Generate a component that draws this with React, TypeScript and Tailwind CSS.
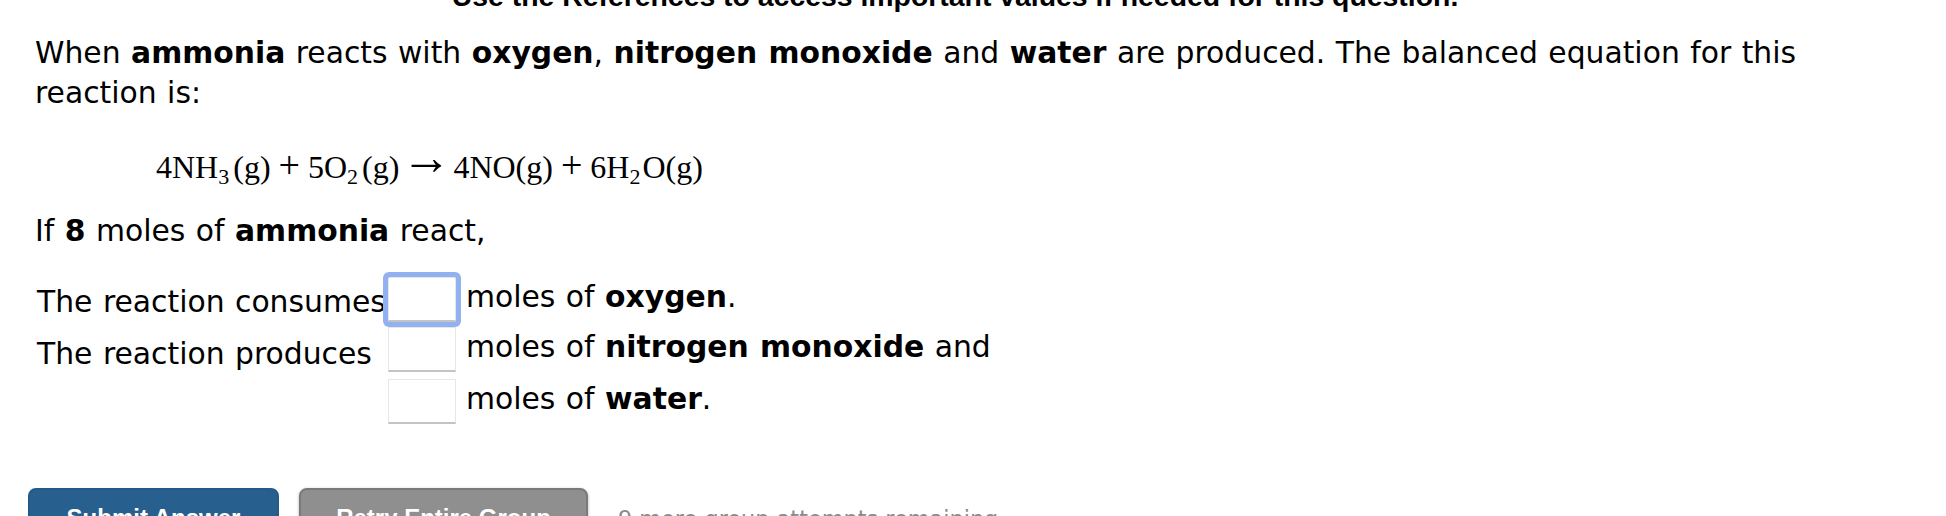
import React from "react";

const sans = { fontFamily: '"DejaVu Sans", Verdana, sans-serif' };
const arial = { fontFamily: '"Liberation Sans", Arial, sans-serif' };
const serif = { fontFamily: '"Liberation Serif", "Times New Roman", serif' };

function Sub({ children }: { children: React.ReactNode }) {
  return <span className="text-[22px] align-[-6px]">{children}</span>;
}

function Plus() {
  return <span className="mx-[8px] text-[38px]">+</span>;
}

function Box({ focused }: { focused?: boolean }) {
  return (
    <div
      className={
        "w-[68px] h-[45px] bg-white border border-[#e6e6e6] border-b-2 border-b-[#c4c4c4] shrink-0 " +
        (focused ? "rounded-[2px] shadow-[0_0_0_5px_#92b1f0]" : "")
      }
    />
  );
}

export default function App() {
  return (
    <div className="w-[1946px] h-[516px] overflow-hidden bg-white text-black" style={sans}>
      <div
        className="mt-[-24px] h-[40px] leading-[40px] text-[28.4px] font-bold text-center pr-[36px] whitespace-nowrap"
        style={arial}
      >
        Use the References to access important values if needed for this question.
      </div>

      <div className="pl-[35px] text-[29.8px] [word-spacing:1px]">
        <p className="mt-[17px] leading-[40px] whitespace-nowrap">
          When <b>ammonia</b> reacts with <b>oxygen</b>, <b>nitrogen monoxide</b> and <b>water</b> are produced. The
          balanced equation for this
          <br />
          reaction is:
        </p>

        <div
          className="mt-[32px] ml-[121px] h-[40px] leading-[40px] text-[32px] whitespace-nowrap [word-spacing:0px]"
          style={serif}
        >
          4NH<Sub>3</Sub>
          <span className="ml-[4px]">(g)</span>
          <Plus />
          5O<Sub>2</Sub>
          <span className="ml-[4px]">(g)</span>
          <span className="ml-[2px] mr-[2px] text-[50px] leading-[0px] align-[4px]">→</span>
          4NO(g)
          <Plus />
          6H<Sub>2</Sub>
          <span className="ml-[2px]">O(g)</span>
        </div>

        <p className="mt-[26px] leading-[40px] whitespace-nowrap">
          If <b>8</b> moles of <b>ammonia</b> react,
        </p>

        <div className="mt-[26px] leading-[40px] whitespace-nowrap">
          <div className="flex items-start h-[50px]">
            <div className="w-[353px] pl-[2px] mt-[5px] shrink-0">The reaction consumes</div>
            <Box focused />
            <div className="ml-[10px]">
              moles of <b>oxygen</b>.
            </div>
          </div>
          <div className="flex items-start h-[52px]">
            <div className="w-[353px] pl-[2px] mt-[7px] shrink-0">The reaction produces</div>
            <Box />
            <div className="ml-[10px]">
              moles of <b>nitrogen monoxide</b> and
            </div>
          </div>
          <div className="flex items-start h-[45px]">
            <div className="w-[353px] shrink-0" />
            <Box />
            <div className="ml-[10px]">
              moles of <b>water</b>.
            </div>
          </div>
        </div>
      </div>

      <div className="mt-[64px] pl-[28px] flex items-start">
        <div
          className="w-[251px] h-[60px] rounded-[8px] bg-[#27608f] border-2 border-[#245a87] pt-[11px] text-center text-white font-bold text-[24px] leading-[34px] whitespace-nowrap"
          style={arial}
        >
          Submit Answer
        </div>
        <div
          className="ml-[20px] w-[289px] h-[60px] rounded-[8px] bg-[#8f8f8f] border-2 border-[#7a7a7a] shadow-[0_1px_3px_rgba(0,0,0,0.35)] pt-[11px] text-center text-white font-bold text-[24px] leading-[34px] whitespace-nowrap"
          style={arial}
        >
          Retry Entire Group
        </div>
        <div className="ml-[30px] mt-[15px] text-[22.4px] leading-[32px] text-[#8a8a8a] whitespace-nowrap">
          9 more group attempts remaining
        </div>
      </div>
    </div>
  );
}
